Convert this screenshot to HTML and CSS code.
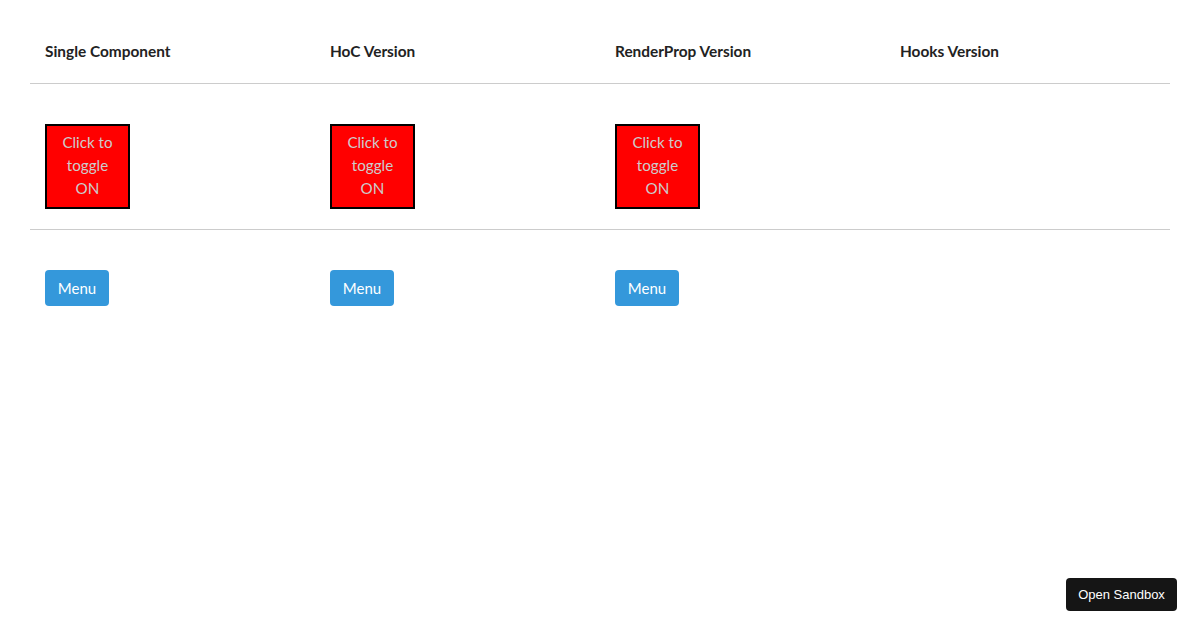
FILE: index.html
```html
<!DOCTYPE html>
<html>
<head>
<meta charset="utf-8">
<link rel="stylesheet" href="styles.css">
</head>
<body>
<div class="page">
  <table class="grid">
    <thead>
      <tr>
        <th>Single Component</th>
        <th>HoC Version</th>
        <th>RenderProp Version</th>
        <th>Hooks Version</th>
      </tr>
    </thead>
    <tbody>
      <tr class="toggles">
        <td><div class="toggle">Click to toggle ON</div></td>
        <td><div class="toggle">Click to toggle ON</div></td>
        <td><div class="toggle">Click to toggle ON</div></td>
        <td></td>
      </tr>
      <tr class="menus">
        <td><button class="menu">Menu</button></td>
        <td><button class="menu">Menu</button></td>
        <td><button class="menu">Menu</button></td>
        <td></td>
      </tr>
    </tbody>
  </table>
</div>
<a class="sandbox">Open Sandbox</a>
</body>
</html>
```
FILE: styles.css
```css
html, body {
  margin: 0;
  padding: 0;
  background: #fff;
}
body {
  font-family: Lato, "Open Sans", sans-serif;
  color: #222;
  width: 1200px;
  height: 630px;
  position: relative;
  overflow: hidden;
}
.page {
  padding: 20px 30px 0 30px;
}
.grid {
  width: 1140px;
  border-collapse: collapse;
  table-layout: fixed;
}
.grid th {
  text-align: left;
  font-weight: 700;
  font-size: 15.4px;
  line-height: 22px;
  padding: 20px 15px 21px 15px;
  border-bottom: 1px solid #ccc;
  color: #222;
}
.grid td {
  padding: 0 15px;
  vertical-align: top;
}
.toggles td {
  padding-top: 40px;
  padding-bottom: 20px;
  border-bottom: 1px solid #ccc;
}
.menus td {
  padding-top: 40px;
}
.toggle {
  box-sizing: border-box;
  width: 85px;
  height: 85px;
  border: 2px solid #000;
  background: #ff0000;
  color: #cccccc;
  font-size: 15.2px;
  line-height: 23px;
  text-align: center;
  padding: 5px 12px 0 12px;
}
.menu {
  box-sizing: border-box;
  height: 36px;
  width: 64px;
  padding: 0;
  border: none;
  border-radius: 4px;
  background: #3498db;
  color: #fff;
  font-family: Lato, "Open Sans", sans-serif;
  font-size: 15px;
}
.sandbox {
  position: absolute;
  right: 23px;
  bottom: 19px;
  box-sizing: border-box;
  height: 33px;
  width: 111px;
  border-radius: 4px;
  background: #151515;
  color: #fff;
  font-family: "Liberation Sans", Arial, sans-serif;
  font-size: 13px;
  line-height: 33px;
  text-align: center;
}
```
